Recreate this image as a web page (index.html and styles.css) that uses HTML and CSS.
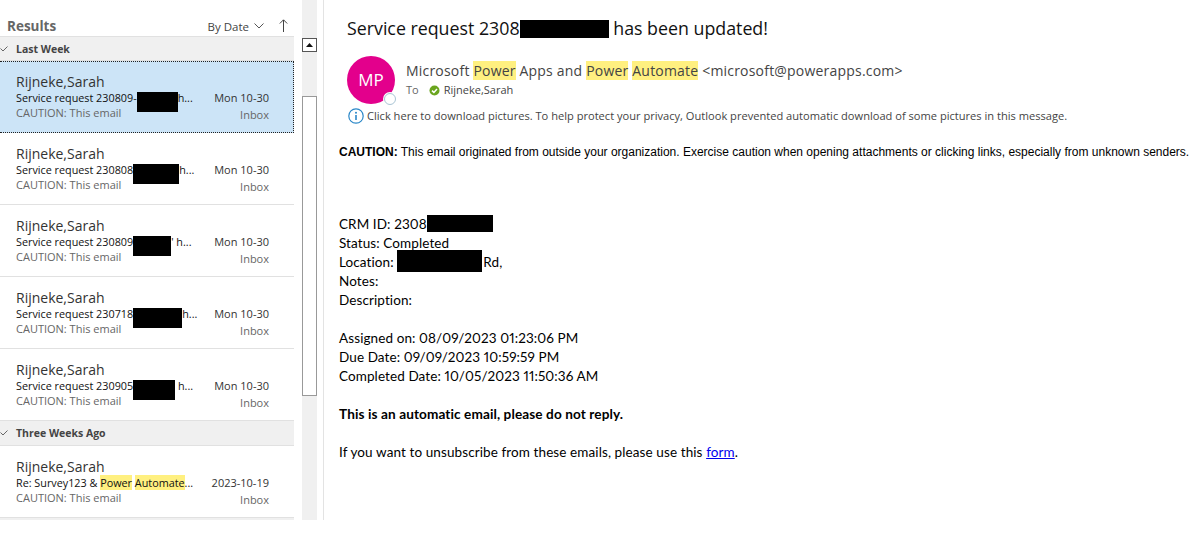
FILE: index.html
```html
<!DOCTYPE html>
<html lang="en">
<head>
    <meta charset="UTF-8">
    <title>Service request - Outlook</title>
    <link rel="stylesheet" href="styles.css">
</head>
<body>
    <div class="app">
        <aside class="sidebar">
            <div class="list-pane">
                <div class="list-head">
                    <span class="results">Results</span>
                    <span class="sort">By Date
                        <svg class="sort-chevron" width="10" height="6" viewBox="0 0 10 6"><path d="M.5.5 5 5 9.500.5" fill="none" stroke="#555" stroke-width="1"/></svg>
                    </span>
                    <svg class="sort-arrow" width="9" height="13" viewBox="0 0 9 13"><path d="M4.500 13V1M.8 4.500 4.500.8l3.700 3.700" fill="none" stroke="#444" stroke-width="1"/></svg>
                </div>

                <div class="group">
                    <svg width="8" height="6" viewBox="0 0 8 6"><path d="M.5 2.500 3 5 7.500.5" fill="none" stroke="#666" stroke-width="1"/></svg>
                    <span>Last Week</span>
                </div>
                <div class="mail selected">
                    <div class="sender">Rijneke,Sarah</div>
                    <div class="line">
                        <span class="subject">Service request 230809-<i class="redact r-41"></i>h...</span>
                        <span class="date">Mon 10-30</span>
                    </div>
                    <div class="line">
                        <span class="preview">CAUTION: This email</span>
                        <span class="folder">Inbox</span>
                    </div>
                </div>
                <div class="mail">
                    <div class="sender">Rijneke,Sarah</div>
                    <div class="line">
                        <span class="subject">Service request 230808<i class="redact r-46"></i>h...</span>
                        <span class="date">Mon 10-30</span>
                    </div>
                    <div class="line">
                        <span class="preview">CAUTION: This email</span>
                        <span class="folder">Inbox</span>
                    </div>
                </div>
                <div class="mail">
                    <div class="sender">Rijneke,Sarah</div>
                    <div class="line">
                        <span class="subject">Service request 230809<i class="redact r-38"></i>' h...</span>
                        <span class="date">Mon 10-30</span>
                    </div>
                    <div class="line">
                        <span class="preview">CAUTION: This email</span>
                        <span class="folder">Inbox</span>
                    </div>
                </div>
                <div class="mail">
                    <div class="sender">Rijneke,Sarah</div>
                    <div class="line">
                        <span class="subject">Service request 230718<i class="redact r-49"></i>h...</span>
                        <span class="date">Mon 10-30</span>
                    </div>
                    <div class="line">
                        <span class="preview">CAUTION: This email</span>
                        <span class="folder">Inbox</span>
                    </div>
                </div>
                <div class="mail">
                    <div class="sender">Rijneke,Sarah</div>
                    <div class="line">
                        <span class="subject">Service request 230905<i class="redact r-42"></i> h...</span>
                        <span class="date">Mon 10-30</span>
                    </div>
                    <div class="line">
                        <span class="preview">CAUTION: This email</span>
                        <span class="folder">Inbox</span>
                    </div>
                </div>

                <div class="group group-later">
                    <svg width="8" height="6" viewBox="0 0 8 6"><path d="M.5 2.500 3 5 7.500.5" fill="none" stroke="#666" stroke-width="1"/></svg>
                    <span>Three Weeks Ago</span>
                </div>
                <div class="mail">
                    <div class="sender">Rijneke,Sarah</div>
                    <div class="line">
                        <span class="subject">Re: Survey123 &amp; <mark>Power</mark> <mark>Automate</mark>...</span>
                        <span class="date">2023-10-19</span>
                    </div>
                    <div class="line">
                        <span class="preview">CAUTION: This email</span>
                        <span class="folder">Inbox</span>
                    </div>
                </div>
                <div class="list-end"></div>
            </div>

            <div class="scrollbar">
                <div class="scroll-up">
                    <svg width="7" height="4" viewBox="0 0 7 4"><path d="M3.500 0 7 4H0z" fill="#111"/></svg>
                </div>
                <div class="scroll-thumb"></div>
            </div>
        </aside>

        <main class="reading">
            <h1 class="title">Service request 2308<i class="redact r-title"></i> has been updated!</h1>

            <div class="from">
                <div class="avatar">MP<span class="presence"></span></div>
                <div class="from-text">
                    <div class="from-name">Microsoft <mark>Power</mark> Apps and <mark>Power</mark> <mark>Automate</mark> &lt;microsoft@powerapps.com&gt;</div>
                    <div class="from-to">
                        <span class="to-label">To</span>
                        <svg width="11" height="11" viewBox="0 0 11 11"><circle cx="5.500" cy="5.500" r="5" fill="#6aa51e"/><path d="M3 5.600 4.900 7.400 8 3.900" fill="none" stroke="#fff" stroke-width="1.500"/></svg>
                        <span>Rijneke,Sarah</span>
                    </div>
                </div>
            </div>

            <div class="infobar">
                <svg width="16" height="16" viewBox="0 0 16 16"><circle cx="8" cy="8" r="7.200" fill="none" stroke="#2b88c8" stroke-width="1.200"/><path d="M8 7v5" stroke="#2b88c8" stroke-width="1.600"/><circle cx="8" cy="4.700" r="1" fill="#2b88c8"/></svg>
                <span>Click here to download pictures. To help protect your privacy, Outlook prevented automatic download of some pictures in this message.</span>
            </div>

            <p class="caution"><b>CAUTION:</b> This email originated from outside your organization. Exercise caution when opening attachments or clicking links, especially from unknown senders.</p>

            <div class="body">
                <div>CRM ID: 2308<i class="redact r-crm"></i></div>
                <div>Status: Completed</div>
                <div>Location: <i class="redact r-loc"></i>Rd,</div>
                <div>Notes:</div>
                <div>Description:</div>
                <br>
                <div>Assigned on: 08/09/2023 01:23:06 PM</div>
                <div>Due Date: 09/09/2023 10:59:59 PM</div>
                <div>Completed Date: 10/05/2023 11:50:36 AM</div>
                <br>
                <div><b>This is an automatic email, please do not reply.</b></div>
                <br>
                <div>If you want to unsubscribe from these emails, please use this <a href="#">form</a>.</div>
            </div>
        </main>
    </div>
</body>
</html>
```

FILE: styles.css
```css
:root {
    --ui-font: "Open Sans", "Noto Sans", sans-serif;
    --rule: #e1e1e1;
    --grey-text: #666;
    --highlight: #fff080;
}

html, body {
    margin: 0;
    padding: 0;
    background: #fff;
}

body {
    font-family: var(--ui-font);
    color: #000;
}

.app {
    display: flex;
    height: 520px;
}

.sidebar {
    display: flex;
    width: 323px;
    flex: none;
    border-right: 1px solid #e3e3e3;
}

.list-pane {
    width: 294px;
    flex: none;
    overflow: hidden;
}

.list-head {
    display: flex;
    align-items: center;
    height: 37px;
    padding: 18px 6px 3px 7px;
    box-sizing: border-box;
    border-bottom: 1px solid var(--rule);
}

.results {
    font-size: 13.500px;
    font-weight: 700;
    color: #666;
    flex: 1;
}

.sort {
    display: flex;
    align-items: center;
    gap: 5px;
    font-size: 11.500px;
    color: #444;
    margin-top: 1px;
}

.sort-arrow {
    margin-left: 15px;
}

.group {
    display: flex;
    align-items: center;
    height: 24px;
    background: #f0f0f0;
    font-size: 10.500px;
    font-weight: 700;
    color: #444;
    border-bottom: 1px solid var(--rule);
    box-sizing: border-box;
}

.group-later {
    height: 25px;
}

.group svg {
    margin-right: 8px;
}

.mail {
    height: 72px;
    box-sizing: border-box;
    padding: 12px 25px 0 16px;
    border-bottom: 1px solid var(--rule);
}

.mail.selected {
    background: #cce4f7;
    border: 1px dotted #222;
    border-left: none;
    padding-top: 11px;
    padding-right: 24px;
}

.sender {
    font-size: 14px;
    line-height: 17px;
    color: #333;
}

.line {
    display: flex;
    justify-content: space-between;
    align-items: flex-start;
    white-space: nowrap;
    height: 15px;
}

.subject {
    font-size: 10.800px;
    line-height: 15px;
    color: #111;
}

.date {
    font-size: 11px;
    line-height: 15px;
    color: #333;
}

.preview {
    font-size: 11px;
    line-height: 15px;
    color: var(--grey-text);
}

.folder {
    font-size: 11px;
    line-height: 15px;
    color: var(--grey-text);
    margin-top: 2px;
}

.list-end {
    height: 3px;
    background: #f0f0f0;
}

mark {
    background: var(--highlight);
    color: inherit;
}

.redact {
    display: inline-block;
    background: #000;
}

.line .redact {
    height: 20px;
    vertical-align: -6px;
    margin: -4px 0;
}

.r-41 { width: 41px; }
.r-46 { width: 46px; }
.r-38 { width: 38px; }
.r-49 { width: 49px; }
.r-42 { width: 42px; }
.r-title { width: 89px; height: 18px; vertical-align: -3px; }
.r-crm { width: 66px; height: 17px; vertical-align: -3px; }
.r-loc { width: 85px; height: 22px; vertical-align: -5px; margin: -4px 1px 0 0; }

.scrollbar {
    width: 15px;
    margin-left: 8px;
    background: #f0f0f0;
    display: flex;
    flex-direction: column;
}

.scroll-up {
    height: 14px;
    margin-top: 38px;
    box-sizing: border-box;
    background: #fff;
    border: 1px solid #555;
    display: flex;
    align-items: center;
    justify-content: center;
}

.scroll-thumb {
    height: 300px;
    margin-top: 44px;
    box-sizing: border-box;
    background: #fff;
    border: 1px solid #999;
}

.reading {
    flex: 1;
    min-width: 0;
    padding: 0 0 0 15px;
    overflow: hidden;
}

.title {
    margin: 16px 0 0 8px;
    font-size: 17.800px;
    line-height: 24px;
    font-weight: 400;
    color: #111;
    white-space: nowrap;
}

.from {
    display: flex;
    margin: 16px 0 0 8px;
    gap: 11px;
}

.avatar {
    position: relative;
    width: 48px;
    height: 48px;
    flex: none;
    border-radius: 50%;
    background: #e3008c;
    color: #fff;
    font-size: 17px;
    line-height: 48px;
    text-align: center;
}

.presence {
    position: absolute;
    right: -1px;
    bottom: -1px;
    width: 10px;
    height: 10px;
    border: 1px solid #a9c4d4;
    border-radius: 50%;
    background: #fff;
    box-shadow: 0 0 0 1px #fff;
}

.from-text {
    padding-top: 6px;
}

.from-name {
    font-size: 14px;
    letter-spacing: .2px;
    line-height: 18px;
    color: #444;
    white-space: nowrap;
}

.from-to {
    display: flex;
    align-items: center;
    gap: 4px;
    margin-top: 2px;
    font-size: 11px;
    line-height: 16px;
    color: #444;
}

.to-label {
    margin-right: 6px;
    color: #666;
}

.infobar {
    display: flex;
    align-items: center;
    gap: 3px;
    margin: 4px 0 0 9px;
    font-size: 11.100px;
    line-height: 16px;
    color: #444;
    white-space: nowrap;
}

.caution {
    margin: 20px 0 0;
    font-family: "Liberation Sans", Arial, sans-serif;
    font-size: 12px;
    line-height: 16px;
    white-space: nowrap;
}

.body {
    margin-top: 55px;
    font-family: Lato, "Open Sans", sans-serif;
    font-size: 13.500px;
    letter-spacing: .1px;
    font-variant-numeric: proportional-nums;
    line-height: 19px;
    color: #000;
}

.body b {
    font-size: 13.600px;
}

.body a {
    color: #0000ee;
}
```
